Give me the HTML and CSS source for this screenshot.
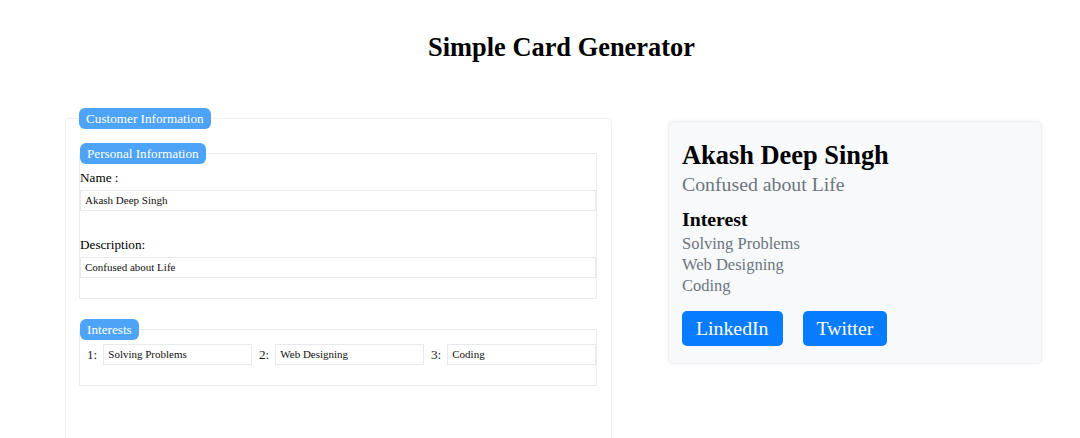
FILE: index.html
```html
<!DOCTYPE html>
<html lang="en">
<head>
<meta charset="utf-8">
<title>Simple Card Generator</title>
<link rel="stylesheet" href="styles.css">
</head>
<body>
<h1 class="title">Simple Card Generator</h1>
<main class="layout">
  <form class="form-col">
    <fieldset class="outer">
      <legend class="tag">Customer Information</legend>
      <fieldset class="inner personal">
        <legend class="tag">Personal Information</legend>
        <label class="field-label first" for="name">Name :</label>
        <input class="text-input" id="name" type="text" value="Akash Deep Singh">
        <label class="field-label second" for="desc">Description:</label>
        <input class="text-input" id="desc" type="text" value="Confused about Life">
      </fieldset>
      <fieldset class="inner interests">
        <legend class="tag">Interests</legend>
        <div class="interest-row">
          <div class="interest"><span class="num">1:</span><input class="text-input" type="text" value="Solving Problems"></div>
          <div class="interest"><span class="num">2:</span><input class="text-input" type="text" value="Web Designing"></div>
          <div class="interest"><span class="num">3:</span><input class="text-input" type="text" value="Coding"></div>
        </div>
      </fieldset>
    </fieldset>
  </form>
  <section class="card">
    <h2 class="card-name">Akash Deep Singh</h2>
    <p class="card-desc">Confused about Life</p>
    <h3 class="card-sub">Interest</h3>
    <ul class="card-list">
      <li>Solving Problems</li>
      <li>Web Designing</li>
      <li>Coding</li>
    </ul>
    <div class="card-actions">
      <a class="btn" href="#">LinkedIn</a>
      <a class="btn" href="#">Twitter</a>
    </div>
  </section>
</main>
</body>
</html>
```
FILE: styles.css
```css
* { box-sizing: border-box; }

html, body {
  margin: 0;
  padding: 0;
  background: #ffffff;
  font-family: "Liberation Serif", "Times New Roman", serif;
  color: #000;
  overflow: hidden;
}

.title {
  margin: 30.6px 0 0;
  padding-left: 43px;
  font-size: 26.4px;
  line-height: 32px;
  font-weight: bold;
  text-align: center;
}

.layout {
  display: flex;
  align-items: flex-start;
  margin-top: 45px;
  padding-left: 65px;
  gap: 56px;
}

.form-col {
  width: 547px;
  flex: none;
  margin: 0;
}

fieldset {
  margin: 0;
  min-width: 0;
}

.outer {
  border: 1px solid #f0f1f3;
  border-radius: 4px;
  padding: 0 14px 90px 13px;
  box-shadow: 0 0 3px rgba(0, 0, 0, 0.03);
}

.inner {
  border: 1px solid #ebecee;
  padding: 0 0 20px 0;
}

.personal { margin-top: 14px; }
.interests { margin-top: 20px; }

.tag {
  background: #4da3f5;
  color: #fff;
  font-size: 13.2px;
  line-height: 21px;
  padding: 0 7px;
  border-radius: 6px;
}

.field-label {
  display: block;
  font-size: 13.2px;
  line-height: 18px;
  margin-bottom: 3px;
}

.field-label.first { margin-top: 5px; }
.field-label.second { margin-top: 25px; }

.text-input {
  display: block;
  width: 100%;
  height: 21px;
  margin: 0;
  padding: 0 4px;
  border: 1px solid #e8e9eb;
  border-radius: 0;
  background: #fff;
  font-family: "Liberation Serif", "Times New Roman", serif;
  font-size: 11px;
  color: #111;
  outline: none;
}

.interest-row {
  display: flex;
  margin-top: 4px;
}

.interest {
  flex: 1 1 0;
  min-width: 0;
  display: flex;
  align-items: center;
  padding-left: 7px;
  gap: 6px;
}

.num {
  font-size: 13.2px;
  line-height: 21px;
  color: #222;
}

.interest .text-input {
  flex: 1 1 0;
  min-width: 0;
}

.card {
  width: 374px;
  flex: none;
  margin-top: 13px;
  padding: 17px 13px 17px;
  background: #f8f9fb;
  border: 1px solid #eef0f3;
  border-radius: 5px;
  box-shadow: 0 0 5px rgba(0, 0, 0, 0.05);
}

.card-name {
  margin: 0;
  font-size: 26.4px;
  line-height: 32px;
  font-weight: bold;
}

.card-desc {
  margin: 1.5px 0 0;
  font-size: 19.8px;
  line-height: 24px;
  color: #6c757d;
}

.card-sub {
  margin: 11px 0 0;
  font-size: 19.8px;
  line-height: 24px;
  font-weight: bold;
}

.card-list {
  list-style: none;
  margin: 1.7px 0 0;
  padding: 0;
  font-size: 16.5px;
  line-height: 21px;
  color: #6c757d;
}

.card-actions {
  display: flex;
  gap: 20px;
  margin-top: 15px;
}

.btn {
  display: inline-block;
  height: 35px;
  padding: 0 14px;
  background: #087cff;
  color: #fff;
  font-size: 19.8px;
  line-height: 35px;
  border-radius: 5px;
  text-decoration: none;
}
```
